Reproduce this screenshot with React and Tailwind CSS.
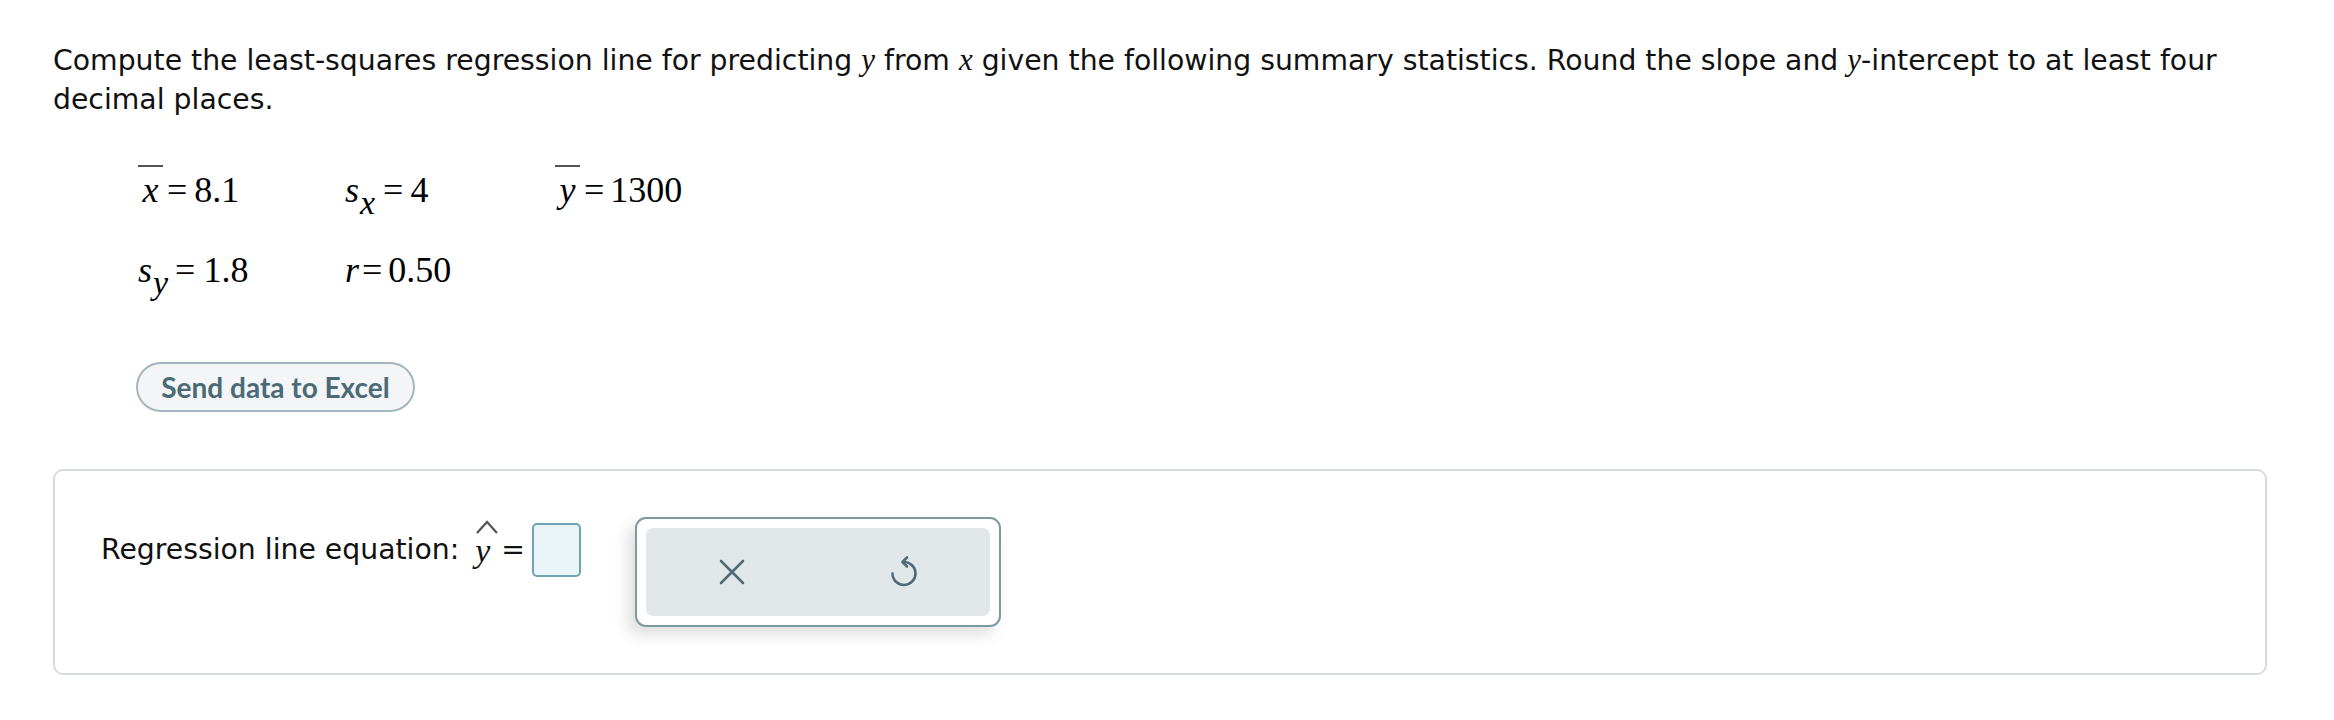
import React from 'react';

function Bar({ children, width = 'w-[25px]' }) {
  return (
    <span className={`relative inline-block text-center ${width}`}>
      <span className="absolute left-0 right-0 top-[-5px] h-[2px] bg-[#555]" />
      <i>{children}</i>
    </span>
  );
}

function Eq({ className = 'ml-[4px] mr-[7px]' }) {
  return <span className={className}>=</span>;
}

function Sub({ children }) {
  return <i className="relative top-[12px] inline-block text-[34px] ml-[1px]">{children}</i>;
}

function XIcon() {
  return (
    <svg width="26" height="26" viewBox="0 0 26 26" fill="none" stroke="#4d6b76" strokeWidth="2.6" strokeLinecap="round">
      <path d="M2 2 L24 24" />
      <path d="M24 2 L2 24" />
    </svg>
  );
}

function UndoIcon() {
  return (
    <svg width="30" height="34" viewBox="0 0 30 34" fill="none" stroke="#4d6b76" strokeWidth="2.6" strokeLinecap="round" strokeLinejoin="round">
      <path d="M14 7 A11.5 11.5 0 1 1 3.5 18.5" />
      <path d="M18 2.5 L13.5 7 L18 11.5" />
    </svg>
  );
}

export default function App() {
  return (
    <div className="min-h-[720px] bg-white text-black pt-[41px] pl-[53px]">
      {/* Question */}
      <p className="w-[2214px] text-[28.3px] leading-[39px] text-[#111] font-['DejaVu_Sans',Verdana,sans-serif]">
        Compute the least-squares regression line for predicting{' '}
        <i className="font-['Liberation_Serif',serif] text-[31px] leading-none">y</i> from{' '}
        <i className="font-['Liberation_Serif',serif] text-[31px] leading-none">x</i> given the following summary statistics. Round the slope and{' '}
        <i className="font-['Liberation_Serif',serif] text-[31px] leading-none">y</i>-intercept to at least four decimal places.
      </p>

      {/* Summary statistics */}
      <div className="mt-[51px] pl-[85px] text-[36px] leading-[40px] text-black font-['Liberation_Serif',serif]">
        <div className="flex h-[80px]">
          <div className="w-[207px] whitespace-nowrap">
            <Bar>x</Bar>
            <Eq className="ml-[4px] mr-[7px]" />8.1
          </div>
          <div className="w-[210px] whitespace-nowrap">
            <i>s</i>
            <Sub>x</Sub>
            <Eq className="ml-[8px] mr-[7px]" />4
          </div>
          <div className="whitespace-nowrap">
            <Bar>y</Bar>
            <Eq className="ml-[4px] mr-[6px]" />1300
          </div>
        </div>
        <div className="flex h-[77px]">
          <div className="w-[207px] whitespace-nowrap">
            <i>s</i>
            <Sub>y</Sub>
            <Eq className="ml-[7px] mr-[8px]" />1.8
          </div>
          <div className="w-[210px] whitespace-nowrap">
            <i>r</i>
            <Eq className="ml-[3px] mr-[6px]" />0.50
          </div>
        </div>
      </div>

      {/* Excel button */}
      <button className="mt-[35px] ml-[83px] flex h-[50px] w-[279px] items-center justify-center rounded-full border-2 border-[#a6b6bd] bg-[#f3f5f7] text-[28px] font-bold text-[#4a6b76] font-['Lato','Open_Sans',sans-serif]">
        Send data to Excel
      </button>

      {/* Answer box */}
      <div className="mt-[57px] flex w-[2214px] items-start rounded-[10px] border-2 border-[#d5dbde] px-[46px] py-[46px]">
        <div className="mt-[6px] flex h-[54px] items-center text-[28.3px] text-[#111] font-['DejaVu_Sans',Verdana,sans-serif]">
          <span>Regression line equation:</span>
          <span className="relative ml-[16px] inline-block font-['Liberation_Serif',serif] text-[34px]">
            <svg className="absolute left-[0px] top-[-6px]" width="24" height="16" viewBox="0 0 24 16" fill="none" stroke="#555" strokeWidth="2.2">
              <path d="M2 14 L12 3 L22 14" />
            </svg>
            <i className="inline-block w-[22px]">y</i>
          </span>
          <span className="ml-[4px] mr-[7px]">=</span>
          <span className="h-[54px] w-[49px] rounded-[5px] border-2 border-[#6ea3b4] bg-[#eaf5f9]" />
        </div>

        <div className="ml-[54px] h-[110px] w-[366px] rounded-[11px] border-2 border-[#7f99a3] bg-white p-[9px] shadow-[-7px_8px_16px_rgba(0,0,0,0.13)]">
          <div className="grid h-full grid-cols-2 items-center rounded-[7px] bg-[#e1e6e8]">
            <div className="flex justify-center">
              <XIcon />
            </div>
            <div className="flex justify-center">
              <UndoIcon />
            </div>
          </div>
        </div>
      </div>
    </div>
  );
}
